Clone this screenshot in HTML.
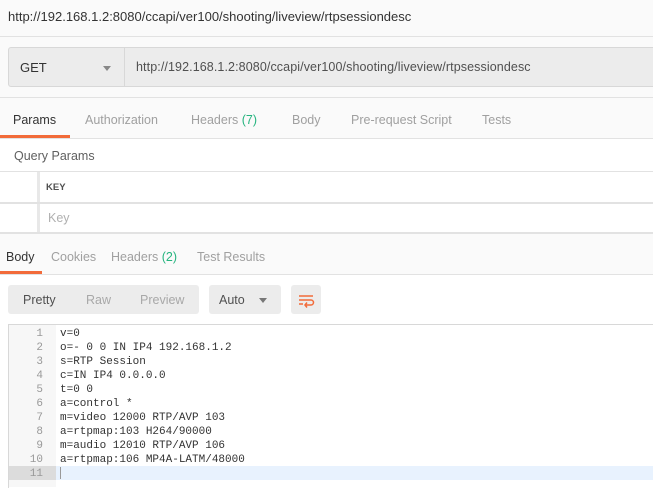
<html><head><style>
body{margin:0;width:653px;height:487px;background:#fff;font-family:"Liberation Sans",sans-serif;position:relative;overflow:hidden;font-size:12px;color:#505050}
.a{position:absolute}
.t{position:absolute;white-space:nowrap}
.hl{position:absolute;left:0;width:653px;height:1px;background:#e2e2e2}
.tab{position:absolute;color:#a0a0a0;font-size:12.5px;white-space:nowrap}
.g{color:#26b47f}
.code{font-family:"Liberation Mono","DejaVu Sans Mono",monospace;font-size:11px;color:#333}
</style></head><body>
<div class="a" style="left:0;top:0;width:653px;height:138px;background:#fafafa"></div>
<div class="t" style="left:8px;top:9px;font-size:13px;color:#333">http://192.168.1.2:8080/ccapi/ver100/shooting/liveview/rtpsessiondesc</div>
<div class="hl" style="top:36px"></div>
<div class="a" style="left:8px;top:47px;width:650px;height:38px;background:#ececec;border:1px solid #d8d8d8;border-radius:3px"></div>
<div class="a" style="left:124px;top:48px;width:1px;height:38px;background:#d8d8d8"></div>
<div class="t" style="left:20px;top:60px;font-size:13px;color:#333">GET</div>
<div class="a" style="left:103px;top:66px;width:0;height:0;border-left:4px solid transparent;border-right:4px solid transparent;border-top:5px solid #888"></div>
<div class="t" style="left:136px;top:60px;font-size:12.5px;letter-spacing:0.1px;color:#505050">http://192.168.1.2:8080/ccapi/ver100/shooting/liveview/rtpsessiondesc</div>
<div class="hl" style="top:97px"></div>
<div class="tab" style="left:13px;top:113px;color:#333">Params</div>
<div class="a" style="left:0;top:135px;width:70px;height:3px;background:#f26b3a"></div>
<div class="tab" style="left:85px;top:113px">Authorization</div>
<div class="tab" style="left:191px;top:113px">Headers <span class="g">(7)</span></div>
<div class="tab" style="left:292px;top:113px">Body</div>
<div class="tab" style="left:351px;top:113px">Pre-request Script</div>
<div class="tab" style="left:482px;top:113px">Tests</div>
<div class="hl" style="top:138px"></div>
<div class="t" style="left:14px;top:149px;font-size:12.5px;color:#606060">Query Params</div>
<div class="hl" style="top:171px"></div>
<div class="a" style="left:37px;top:172px;width:3px;height:61px;background:#e8e8e8"></div>
<div class="t" style="left:46px;top:182px;font-size:9.5px;font-weight:bold;color:#505050">KEY</div>
<div class="hl" style="top:202px;height:2px"></div>
<div class="t" style="left:48px;top:211px;font-size:12.5px;color:#b0b0b0">Key</div>
<div class="hl" style="top:232px;height:2px"></div>
<div class="a" style="left:0;top:234px;width:653px;height:40px;background:#fafafa"></div>
<div class="tab" style="left:6px;top:250px;color:#333">Body</div>
<div class="a" style="left:0;top:271px;width:42px;height:3px;background:#f26b3a"></div>
<div class="tab" style="left:51px;top:250px">Cookies</div>
<div class="tab" style="left:111px;top:250px">Headers <span class="g">(2)</span></div>
<div class="tab" style="left:197px;top:250px">Test Results</div>
<div class="hl" style="top:274px"></div>
<div class="a" style="left:8px;top:285px;width:191px;height:29px;background:#ececec;border-radius:3px"></div>
<div class="tab" style="left:23px;top:293px;color:#505050">Pretty</div>
<div class="tab" style="left:86px;top:293px;color:#a8a8a8">Raw</div>
<div class="tab" style="left:140px;top:293px;color:#a8a8a8">Preview</div>
<div class="a" style="left:209px;top:285px;width:72px;height:29px;background:#ececec;border-radius:3px"></div>
<div class="tab" style="left:219px;top:293px;color:#505050">Auto</div>
<div class="a" style="left:259px;top:298px;width:0;height:0;border-left:4px solid transparent;border-right:4px solid transparent;border-top:5px solid #777"></div>
<div class="a" style="left:291px;top:285px;width:30px;height:29px;background:#ececec;border-radius:3px"></div>
<svg class="a" style="left:297px;top:291px" width="18" height="18" viewBox="0 0 18 18"><path d="M2 5H16M2 9H14a2.5 2.5 0 0 1 0 5H9M2 13H6M10 11.5L8 14l2 2.5" stroke="#f26b3a" stroke-width="1.5" fill="none"/></svg>
<div class="a" style="left:8px;top:324px;width:645px;height:163px;border-top:1px solid #d8d8d8;border-left:1px solid #d8d8d8;background:#fff"></div>
<div class="a" style="left:9px;top:325px;width:47px;height:162px;background:#f7f7f7"></div>
<div class="a" style="left:56px;top:466px;width:597px;height:14px;background:#e8f2fe"></div>
<div class="a" style="left:9px;top:466px;width:47px;height:14px;background:#dcdcdc"></div>
<div class="a" style="left:60px;top:467px;width:1px;height:12px;background:#999"></div>
<div class="a code" style="left:9px;top:327px;width:34px;text-align:right;line-height:14px;color:#999">1<br>2<br>3<br>4<br>5<br>6<br>7<br>8<br>9<br>10<br>11</div>
<div class="a code" style="left:60px;top:327px;line-height:14px;white-space:pre">v=0
o=- 0 0 IN IP4 192.168.1.2
s=RTP Session
c=IN IP4 0.0.0.0
t=0 0
a=control *
m=video 12000 RTP/AVP 103
a=rtpmap:103 H264/90000
m=audio 12010 RTP/AVP 106
a=rtpmap:106 MP4A-LATM/48000</div>
</body></html>
